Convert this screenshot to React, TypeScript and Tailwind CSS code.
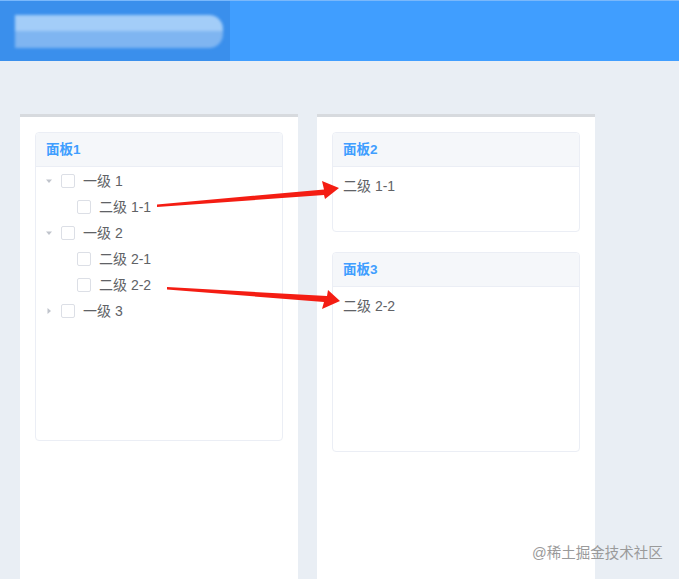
import React from "react";

type Node = { label: string; level: number; caret?: "down" | "right" };

const tree: Node[] = [
  { label: "一级 1", level: 1, caret: "down" },
  { label: "二级 1-1", level: 2 },
  { label: "一级 2", level: 1, caret: "down" },
  { label: "二级 2-1", level: 2 },
  { label: "二级 2-2", level: 2 },
  { label: "一级 3", level: 1, caret: "right" },
];

function Caret({ dir }: { dir?: "down" | "right" }) {
  if (!dir) return <span className="w-[8px] shrink-0" />;
  return (
    <svg width="8" height="8" viewBox="0 0 8 8" className="shrink-0">
      {dir === "down" ? <path d="M1 2.5 L7 2.5 L4 6 Z" fill="#c0c4cc" /> : <path d="M2.5 1 L6 4 L2.5 7 Z" fill="#c0c4cc" />}
    </svg>
  );
}

function Panel({ title, className, children }: { title: string; className: string; children?: React.ReactNode }) {
  return (
    <div className={`flex flex-col rounded-[4px] border border-[#ebeef5] bg-white ${className}`}>
      <div className="flex h-[34px] items-center rounded-t-[4px] border-b border-[#ebeef5] bg-[#f5f7fa] px-[10px] pt-[2px] text-[13.5px] font-bold text-[#409eff]">{title}</div>
      {children}
    </div>
  );
}

export default function App() {
  return (
    <div className="relative h-[579px] w-[679px] overflow-hidden bg-[#e9eef4] font-['Liberation_Sans','Noto_Sans_CJK_SC',sans-serif]">
      <header className="flex h-[61px] border-t border-[#7ab8fb] bg-[#409eff]">
        <div className="flex w-[230px] items-center bg-[#3a8fec] pl-[15px]">
          <div className="flex h-[33px] w-[208px] flex-col overflow-hidden rounded-r-[14px] blur-[1.5px]">
            <div className="h-1/2 bg-[#a3cdf8]" />
            <div className="h-1/2 bg-[#7fb5f1]" />
          </div>
        </div>
      </header>

      <main className="flex gap-[19px] pl-[20px] pt-[53px]">
        <section className="h-[470px] w-[278px] border-t-[3px] border-[#d7dade] bg-white p-[15px]">
          <Panel title="面板1" className="h-[309px]">
            <div className="pt-[1px]">
              {tree.map((n) => (
                <div key={n.label} className={`flex h-[26px] items-center gap-[8px] text-[14px] text-[#606266] ${n.level === 1 ? "pl-[9px]" : "pl-[25px]"}`}>
                  <Caret dir={n.caret} />
                  <span className="h-[14px] w-[14px] shrink-0 rounded-[2px] border border-[#dcdfe6] bg-white" />
                  <span>{n.label}</span>
                </div>
              ))}
            </div>
          </Panel>
        </section>

        <section className="flex h-[470px] w-[278px] flex-col gap-[20px] border-t-[3px] border-[#d7dade] bg-white p-[15px]">
          <Panel title="面板2" className="h-[100px]">
            <div className="px-[10px] pt-[9px] text-[14px] text-[#606266]">二级 1-1</div>
          </Panel>
          <Panel title="面板3" className="h-[200px]">
            <div className="px-[10px] pt-[9px] text-[14px] text-[#606266]">二级 2-2</div>
          </Panel>
        </section>
      </main>

      <svg className="pointer-events-none absolute left-0 top-0" width="679" height="579">
        <path d="M157 204.5 L324 189.5 L322 181 L339 188 L325 199 L324 195 L157 207 Z" fill="#f41d13" />
        <path d="M167 287 L327 296 L328 290 L340 301 L322 309 L324 302 L167 289.5 Z" fill="#f41d13" />
      </svg>

      <div className="absolute left-[532px] top-[543px] text-[14.5px] text-[#9a9a9a]">@稀土掘金技术社区</div>
    </div>
  );
}
